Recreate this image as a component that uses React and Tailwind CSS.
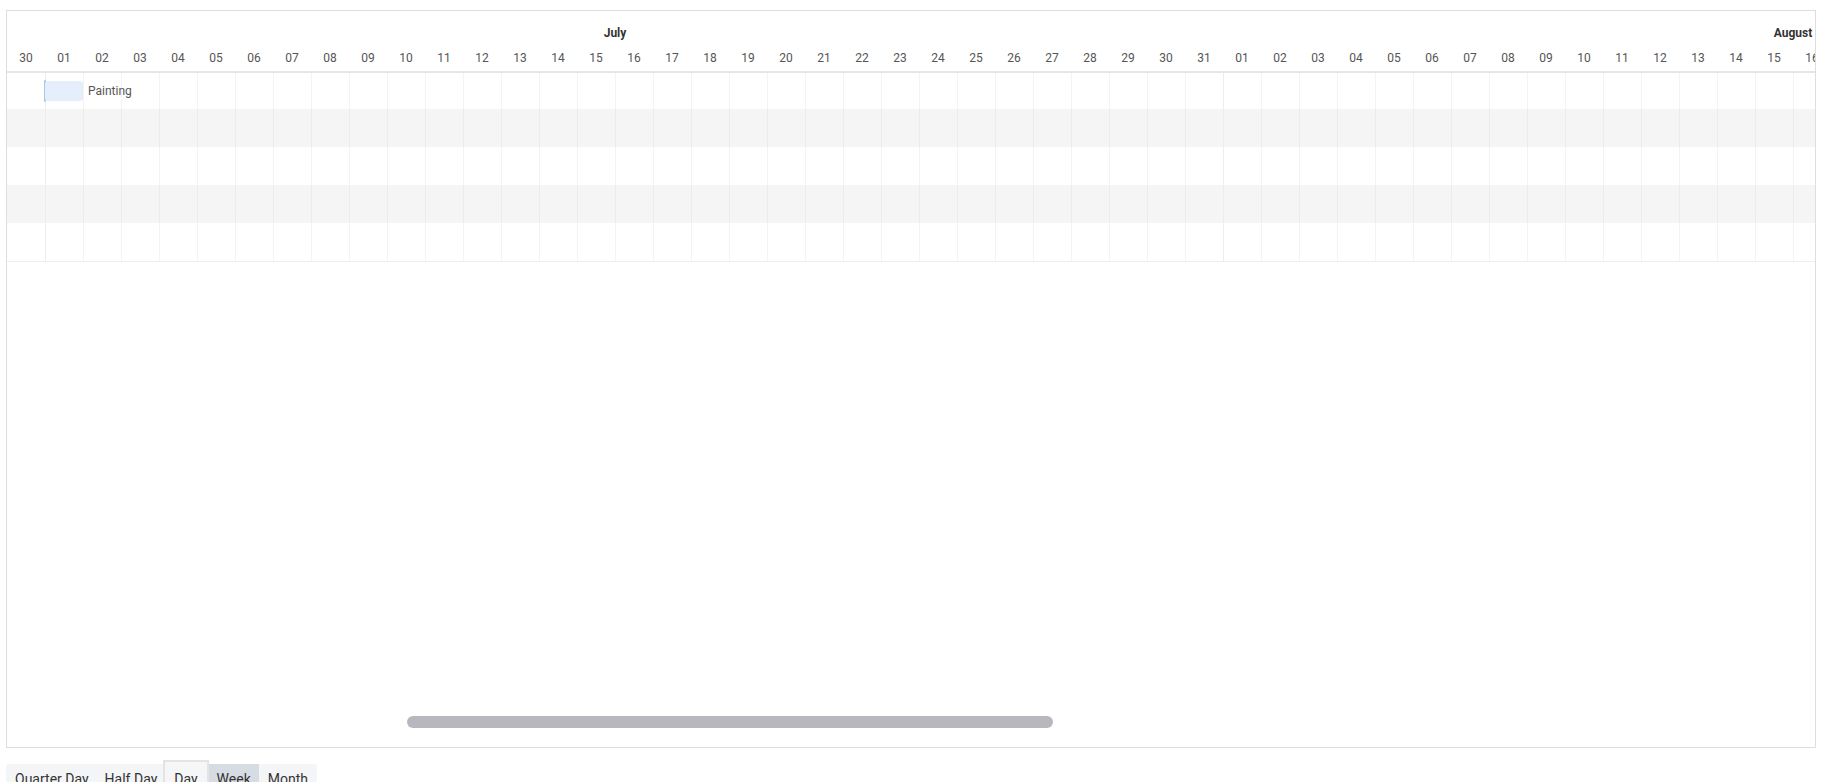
import React from "react";

const pad = (n) => String(n).padStart(2, "0");
const dates = [
  "30",
  ...Array.from({ length: 31 }, (_, i) => pad(i + 1)),
  ...Array.from({ length: 16 }, (_, i) => pad(i + 1)),
];
const monthStarts = new Set([1, 32]);
const rowHeights = ["h-[36px]", "h-[38px]", "h-[38px]", "h-[38px]", "h-[38px]"];

function Row({ index, children }) {
  const gray = index % 2 === 1;
  const last = index === 4;
  return (
    <div
      className={
        "relative flex " +
        rowHeights[index] +
        (gray ? " bg-[#f5f5f5]" : " bg-white") +
        (last ? " border-b border-[#ebeff2] box-content" : "")
      }
    >
      {dates.map((d, i) => (
        <div
          key={i}
          className={
            "w-[38px] shrink-0 h-full " +
            (i === 0
              ? ""
              : monthStarts.has(i)
              ? "border-l border-[#ededed]"
              : gray
              ? "border-l border-[#ececec]"
              : "border-l border-[#f3f3f3]")
          }
        />
      ))}
      {children}
    </div>
  );
}

export default function App() {
  return (
    <div className="min-h-[800px] bg-white pt-[10px] pl-[6px] font-['Roboto','Liberation_Sans',sans-serif]">
      <div className="w-[1810px] h-[738px] border border-[#dedede] flex flex-col overflow-hidden bg-white">
        <div className="w-[1808px] overflow-hidden">
          <div className="w-[1824px]">
            {/* header */}
            <div className="h-[62px] border-b-2 border-[#e6e6e6] flex flex-col">
              <div className="flex h-[40px] pt-[15px] text-[12px] font-bold text-[#333] leading-[14px] whitespace-nowrap">
                <div className="w-[38px] shrink-0" />
                <div className="w-[1140px] shrink-0 text-center">July</div>
                <div className="w-[38px] shrink-0" />
                <div className="w-[1140px] shrink-0 text-center">August</div>
              </div>
              <div className="flex text-[12px] text-[#555] leading-[14px]">
                {dates.map((d, i) => (
                  <div key={i} className="w-[38px] shrink-0 text-center">
                    {d}
                  </div>
                ))}
              </div>
            </div>
            {/* rows */}
            <Row index={0}>
              <div className="absolute left-[37px] top-[7px] w-[2px] h-[22px] bg-[#a9c6ea] rounded-[1px]" />
              <div className="absolute left-[38px] top-[8px] w-[38px] h-[20px] rounded-[3px] bg-[#e4effb]" />
              <div className="absolute left-[81px] top-[8px] h-[20px] flex items-center text-[12px] text-[#555] whitespace-nowrap">
                Painting
              </div>
            </Row>
            <Row index={1} />
            <Row index={2} />
            <Row index={3} />
            <Row index={4} />
          </div>
        </div>
        <div className="flex-1" />
        <div className="pb-[19px] pl-[400px]">
          <div className="w-[646px] h-[12px] rounded-full bg-[#b8b7be]" />
        </div>
      </div>
      <div className="mt-[16px] inline-flex items-start bg-[#f4f5f7] rounded-t-[3px] text-[14px] leading-[20px] text-[#333]">
        <button className="pl-[9px] pr-[8px] pt-[5px] pb-[4px]">Quarter Day</button>
        <button className="pl-[8px] pr-[6px] pt-[5px] pb-[4px]">Half Day</button>
        <button className="-mt-[4px] px-[9px] pt-[7px] pb-[4px] border-2 border-b-0 border-[#e4e4e4] bg-[#f5f6f8]">
          Day
        </button>
        <button className="px-[8px] pt-[5px] pb-[4px] bg-[#d7dce3]">Week</button>
        <button className="px-[9px] pt-[5px] pb-[4px]">Month</button>
      </div>
    </div>
  );
}
